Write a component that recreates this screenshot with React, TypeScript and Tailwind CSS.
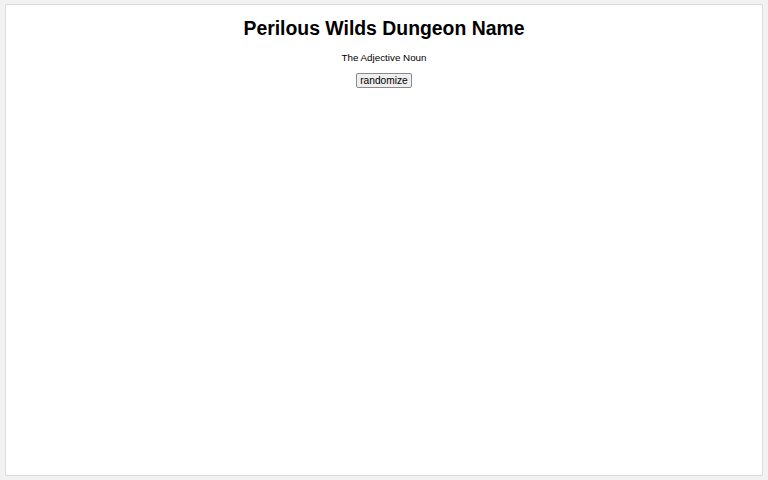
import React, { useState } from 'react';

const adjectives = ['Adjective', 'Sunken', 'Forgotten', 'Howling', 'Crimson', 'Shattered'];
const nouns = ['Noun', 'Crypt', 'Warren', 'Maw', 'Halls', 'Spire'];

const pick = (list: string[]) => list[Math.floor(Math.random() * list.length)];

const App: React.FC = () => {
    const [name, setName] = useState('The Adjective Noun');

    const randomize = () => {
        setName(`The ${pick(adjectives)} ${pick(nouns)}`);
    };

    return (
        <div className="h-[480px] bg-[#f2f2f2] pt-[4px] pb-[4px] px-[5px] font-['Liberation_Sans',Arial,sans-serif]">
            <div className="h-[472px] bg-white border border-[#dcdcdc] flex flex-col items-center text-black">
                <h1 className="mt-[11px] text-[19.4px] leading-[24px] font-bold">Perilous Wilds Dungeon Name</h1>
                <p className="mt-[12px] text-[9.8px] leading-[12px]">{name}</p>
                <button
                    onClick={randomize}
                    className="mt-[9px] h-[15px] px-[3px] text-[10.2px] leading-[12px] bg-[#efefef] border border-[#8a8a8a] rounded-[2px]"
                >
                    randomize
                </button>
            </div>
        </div>
    );
};

export default App;
